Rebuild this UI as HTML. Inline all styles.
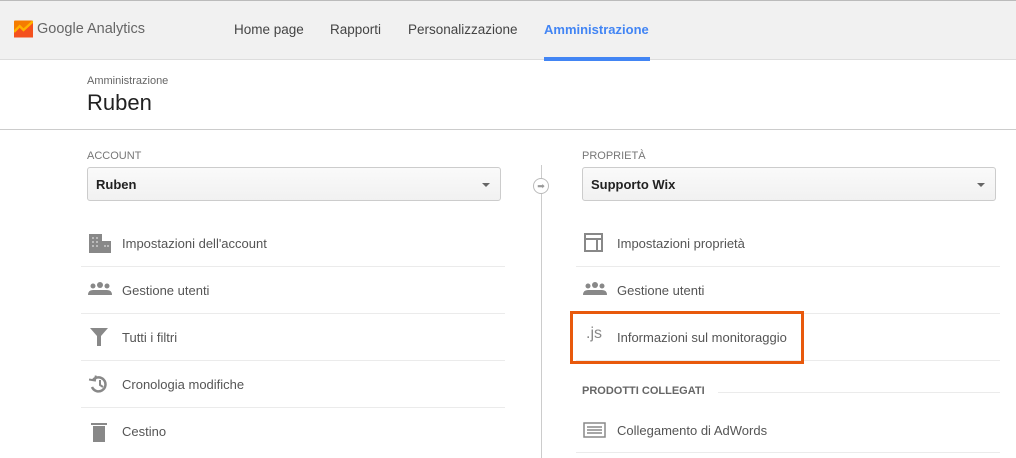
<!DOCTYPE html>
<html><head><meta charset="utf-8"><style>
*{margin:0;padding:0;box-sizing:border-box}
body{width:1016px;height:458px;overflow:hidden;background:#fff;font-family:"Liberation Sans",Arial,sans-serif;position:relative;color:#444}
.a{position:absolute}
.top{left:0;top:0;width:1016px;height:60px;background:#f1f1f1;border-top:1px solid #bbb;border-bottom:1px solid #ddd}
.nav{top:22px;font-size:13.5px;color:#444}
.lbl{font-size:11px;color:#777}
.sel{height:34px;border:1px solid #ccc;border-radius:3px;background:linear-gradient(#fafafa,#f1f1f1);font-size:13px;font-weight:bold;color:#222;padding:9px 8px}
.sel:after{content:"";position:absolute;right:10px;top:15px;border-left:4px solid transparent;border-right:4px solid transparent;border-top:4px solid #666}
.row{height:47px;border-bottom:1px solid #ebebeb;font-size:13px;color:#555}
.row span{position:absolute;left:41px;top:16px}
.row svg{position:absolute;left:7px;top:13px}
</style></head><body>
<div class="a top"></div>
<svg class="a" style="left:14px;top:20px" width="19" height="18" viewBox="0 0 20 18"><rect width="20" height="18" rx="1" fill="#f57c00"/><path d="M0 18 L0 13 L6 7 L10 11 L20 2 L20 18Z" fill="#f4511e"/><path d="M0 12 L6 6 L10 10 L20 1" stroke="#ffb300" stroke-width="2.5" fill="none"/></svg>
<div class="a" style="left:37px;top:21px;font-size:14.5px;color:#666">Google Analytics</div>
<div class="a nav" style="left:234px">Home page</div>
<div class="a nav" style="left:330px">Rapporti</div>
<div class="a nav" style="left:408px">Personalizzazione</div>
<div class="a nav" style="left:544px;color:#4285f4;font-weight:bold;font-size:13px">Amministrazione</div>
<div class="a" style="left:544px;top:57px;width:106px;height:4px;background:#4285f4"></div>
<div class="a" style="left:87px;top:75px;font-size:11px;color:#666">Amministrazione</div>
<div class="a" style="left:87px;top:90px;font-size:22px;color:#222">Ruben</div>
<div class="a" style="left:0;top:129px;width:1016px;height:1px;background:#ccc"></div>

<div class="a lbl" style="left:87px;top:150px">ACCOUNT</div>
<div class="a sel" style="left:87px;top:167px;width:414px">Ruben</div>
<div class="a lbl" style="left:582px;top:150px">PROPRIETÀ</div>
<div class="a sel" style="left:582px;top:167px;width:414px">Supporto Wix</div>
<div class="a" style="left:541px;top:165px;width:1px;height:293px;background:#ccc"></div>
<div class="a" style="left:533px;top:178px;width:16px;height:16px;border:1px solid #bbb;border-radius:50%;background:#fff;font-size:9px;color:#999;text-align:center;line-height:14px">➡</div>

<div class="a row" style="left:81px;top:220px;width:424px"><svg width="24" height="20"><rect x="1" y="1" width="13" height="19" fill="#888"/><rect x="14" y="8" width="9" height="12" fill="#888"/><path d="M4 4h2v2h-2zM8 4h2v2h-2zM4 8h2v2h-2zM8 8h2v2h-2zM4 12h2v2h-2zM8 12h2v2h-2zM16 12h2v2h-2zM19 12h2v2h-2z" fill="#bbb"/></svg><span>Impostazioni dell'account</span></div>
<div class="a row" style="left:81px;top:267px;width:424px"><svg width="24" height="20"><circle cx="5" cy="6" r="2.5" fill="#888"/><circle cx="12" cy="5" r="3" fill="#888"/><circle cx="19" cy="6" r="2.5" fill="#888"/><path d="M0 15 Q0 10 5 10 H19 Q24 10 24 15 Z" fill="#888"/></svg><span>Gestione utenti</span></div>
<div class="a row" style="left:81px;top:314px;width:424px"><svg width="24" height="20"><path d="M2 1 H20 L13 9 V19 H9 V9 Z" fill="#888"/></svg><span>Tutti i filtri</span></div>
<div class="a row" style="left:81px;top:361px;width:424px"><svg width="24" height="20"><path d="M5 6 A7 7 0 1 1 4 13" stroke="#888" stroke-width="2.5" fill="none"/><path d="M1 6 H7 V1" stroke="#888" stroke-width="2" fill="none" transform="rotate(10 4 6)"/><path d="M12 6 V11 L15 13" stroke="#888" stroke-width="2" fill="none"/></svg><span>Cronologia modifiche</span></div>
<div class="a row" style="left:81px;top:408px;width:424px;border:none"><svg width="24" height="22"><rect x="5" y="5" width="12" height="16" fill="#888"/><rect x="3" y="2" width="16" height="2" fill="#888"/></svg><span>Cestino</span></div>

<div class="a row" style="left:576px;top:220px;width:424px"><svg width="24" height="22"><rect x="2" y="1" width="17" height="17" fill="none" stroke="#888" stroke-width="2"/><path d="M2 6 H19 M14 6 V18" stroke="#888" stroke-width="2"/></svg><span>Impostazioni proprietà</span></div>
<div class="a row" style="left:576px;top:267px;width:424px"><svg width="24" height="20"><circle cx="5" cy="6" r="2.5" fill="#888"/><circle cx="12" cy="5" r="3" fill="#888"/><circle cx="19" cy="6" r="2.5" fill="#888"/><path d="M0 15 Q0 10 5 10 H19 Q24 10 24 15 Z" fill="#888"/></svg><span>Gestione utenti</span></div>
<div class="a row" style="left:576px;top:314px;width:424px"><div class="a" style="left:10px;top:11px;font-size:16px;color:#888">.js</div><span>Informazioni sul monitoraggio</span></div>
<div class="a" style="left:570px;top:311px;width:234px;height:53px;border:3px solid #e8590c"></div>
<div class="a" style="left:582px;top:385px;font-size:11px;font-weight:bold;color:#666">PRODOTTI COLLEGATI</div>
<div class="a" style="left:718px;top:392px;width:282px;height:1px;background:#ebebeb"></div>
<div class="a row" style="left:576px;top:408px;width:424px;height:45px"><svg width="24" height="20"><rect x="1" y="2" width="21" height="14" fill="none" stroke="#888" stroke-width="1.5"/><path d="M4 6 H19 M4 9 H19 M4 12 H19" stroke="#888" stroke-width="1.5"/></svg><span style="top:15px">Collegamento di AdWords</span></div>
</body></html>
